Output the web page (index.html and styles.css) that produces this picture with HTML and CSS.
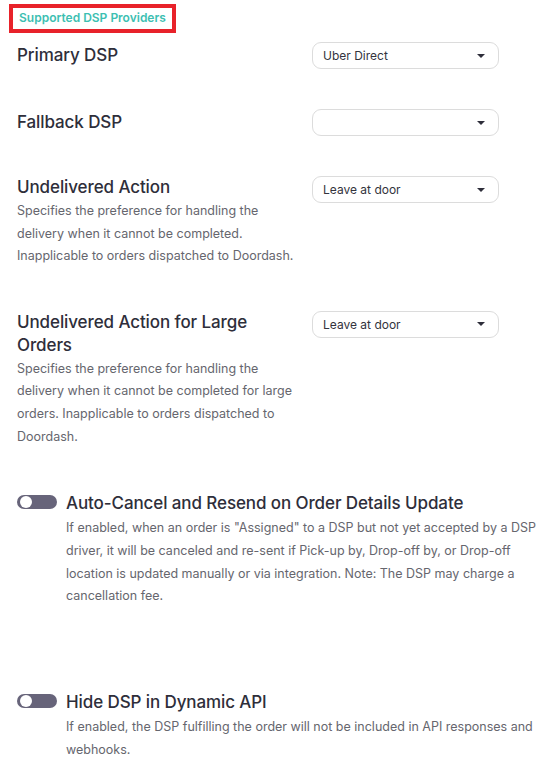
FILE: index.html
```html
<!DOCTYPE html>
<html lang="en">
<head>
  <meta charset="UTF-8" />
  <meta name="viewport" content="width=device-width, initial-scale=1.0"/>
  <title>DSP Settings</title>
  <link rel="stylesheet" href="styles.css">
</head>
<body>
  <div class="settings">
    <div class="section-label"><span>Supported DSP Providers</span></div>

    <div class="row single">
      <div class="info">
        <h4>Primary DSP</h4>
      </div>
      <div class="select"><span>Uber Direct</span><i class="caret"></i></div>
    </div>

    <div class="row single">
      <div class="info">
        <h4>Fallback DSP</h4>
      </div>
      <div class="select"><span></span><i class="caret"></i></div>
    </div>

    <div class="row">
      <div class="info">
        <h4>Undelivered Action</h4>
        <p>Specifies the preference for handling the delivery when it cannot be completed. Inapplicable to orders dispatched to Doordash.</p>
      </div>
      <div class="select"><span>Leave at door</span><i class="caret"></i></div>
    </div>

    <div class="row">
      <div class="info">
        <h4>Undelivered Action for Large Orders</h4>
        <p>Specifies the preference for handling the delivery when it cannot be completed for large orders. Inapplicable to orders dispatched to Doordash.</p>
      </div>
      <div class="select"><span>Leave at door</span><i class="caret"></i></div>
    </div>

    <div class="toggle-row">
      <div class="toggle"><i class="knob"></i></div>
      <div class="info">
        <h4>Auto-Cancel and Resend on Order Details Update</h4>
        <p>If enabled, when an order is "Assigned" to a DSP but not yet accepted by a DSP driver, it will be canceled and re-sent if Pick-up by, Drop-off by, or Drop-off location is updated manually or via integration. Note: The DSP may charge a cancellation fee.</p>
      </div>
    </div>

    <div class="toggle-row">
      <div class="toggle"><i class="knob"></i></div>
      <div class="info">
        <h4>Hide DSP in Dynamic API</h4>
        <p>If enabled, the DSP fulfilling the order will not be included in API responses and webhooks.</p>
      </div>
    </div>
  </div>
</body>
</html>
```

FILE: styles.css
```css
* { margin: 0; padding: 0; box-sizing: border-box; }

body {
  font-family: 'Inter', 'Noto Sans', sans-serif;
  background: #fff;
  color: #2e2e3a;
}

.settings {
  padding: 4px 0 0 17px;
}

.section-label {
  margin-bottom: 9px;
}

.section-label span {
  display: inline-block;
  margin-left: -8px;
  border: 4px solid #e8222a;
  padding: 3px 6px 4px 6px;
  font-size: 12px;
  font-weight: 600;
  color: #3dbfb2;
  line-height: 14px;
}

.row {
  display: grid;
  grid-template-columns: 282px 187px;
  column-gap: 13px;
  align-items: start;
  margin-bottom: 43px;
}

.row.single {
  margin-bottom: 41px;
}

.row.single + .row {
  margin-top: -1px;
}

.info h4 {
  font-size: 17px;
  font-weight: 500;
  line-height: 23px;
  color: #2e2e3a;
  letter-spacing: -0.1px;
}

.row.single h4 {
  line-height: 27px;
}

.info p {
  margin-top: 1px;
  font-size: 12.5px;
  line-height: 22.6px;
  color: #66666e;
}

.select {
  height: 27px;
  border: 1px solid #dcdcdc;
  border-radius: 9px;
  display: flex;
  align-items: center;
  justify-content: space-between;
  padding: 0 13px 0 10px;
  font-size: 12px;
  color: #33333d;
}

.caret {
  width: 0;
  height: 0;
  border-left: 4px solid transparent;
  border-right: 4px solid transparent;
  border-top: 4px solid #2e2e3a;
}

.toggle-row {
  display: flex;
  gap: 9px;
  align-items: flex-start;
  width: 522px;
  margin-bottom: 82px;
}

.toggle-row:last-child {
  margin-bottom: 0;
}

.toggle-row .info h4 {
  line-height: 24px;
}

.toggle-row .info p {
  margin-top: 2px;
  line-height: 22.7px;
}

.toggle {
  flex: none;
  width: 40px;
  height: 14px;
  margin-top: 4px;
  border-radius: 7px;
  background: #67647a;
  position: relative;
}

.knob {
  position: absolute;
  left: 3px;
  top: 1px;
  width: 12px;
  height: 12px;
  border-radius: 50%;
  background: #fff;
}
```
